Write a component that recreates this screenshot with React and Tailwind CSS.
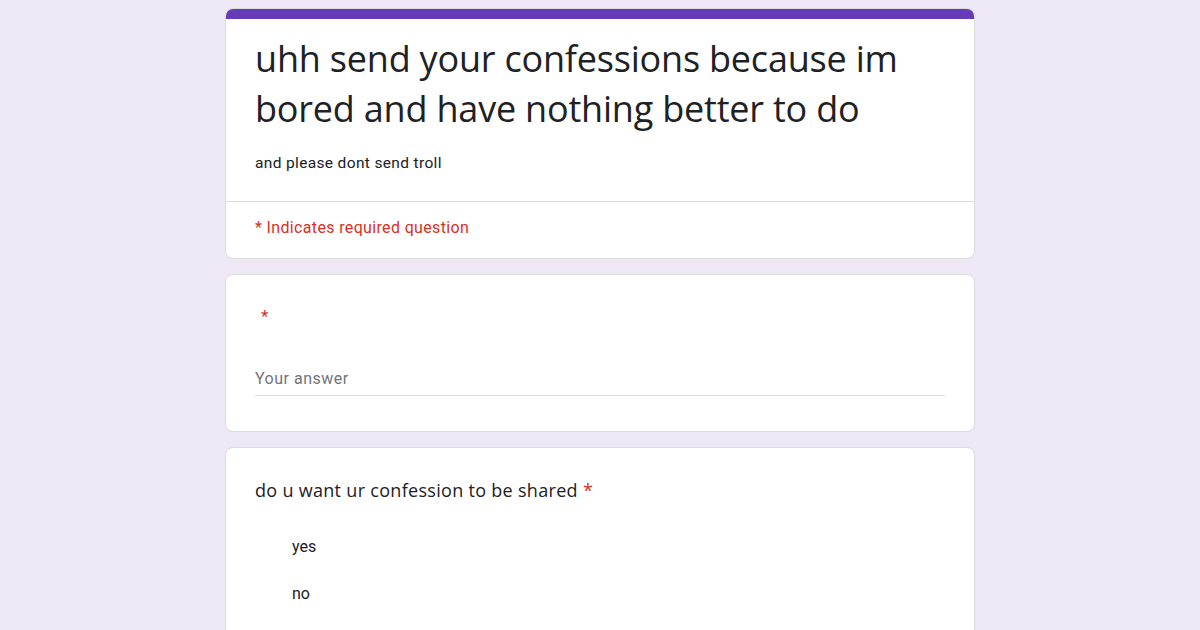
export default function App() {
  return (
    <div className="w-[1200px] h-[630px] overflow-hidden bg-[#ede7f6]" style={{ fontFamily: "Roboto, 'Liberation Sans', sans-serif" }}>
      <div className="w-[750px] mx-auto pt-[8px] flex flex-col gap-[15px]">
        <div className="bg-white rounded-[8px] border border-[#dadce0] overflow-hidden">
          <div className="h-[11px] bg-[#673ab7] -mx-px -mt-px"></div>
          <div className="px-[29px] pt-[15px] pb-[28px] border-b border-[#dadce0]">
            <h1 className="text-[36px] leading-[50px] text-[#202124] tracking-[-0.2px]" style={{ fontFamily: "'Open Sans', Inter, sans-serif" }}>
              uhh send your confessions because im bored and have nothing better to do
            </h1>
            <p className="mt-[19px] text-[15.5px] leading-[20px] text-[#202124] tracking-[0.35px]">and please dont send troll</p>
          </div>
          <div className="px-[29px] h-[56px] pb-[4px] flex items-center text-[16px] text-[#d93025] tracking-[0.35px]">* Indicates required question</div>
        </div>

        <div className="bg-white rounded-[8px] border border-[#dadce0] px-[29px] pt-[29px] h-[158px]">
          <div className="pl-[6px] text-[17px] leading-[24px] text-[#d93025]">*</div>
          <div className="mt-[40px] border-b border-[#dadce0] pb-[5px] text-[16px] leading-[22px] text-[#70757a] tracking-[0.5px]">Your answer</div>
        </div>

        <div className="bg-white rounded-[8px] border border-[#dadce0] px-[29px] pt-[29px] h-[300px]">
          <div className="text-[18px] leading-[26px] text-[#202124] tracking-[0.3px]" style={{ fontFamily: "'Open Sans', Inter, sans-serif" }}>
            do u want ur confession to be shared <span className="text-[#d93025]">*</span>
          </div>
          <div className="pl-[37px] mt-[33px] flex flex-col gap-[25px] text-[16px] leading-[22px] text-[#202124]">
            <div>yes</div>
            <div>no</div>
          </div>
        </div>
      </div>
    </div>
  );
}
